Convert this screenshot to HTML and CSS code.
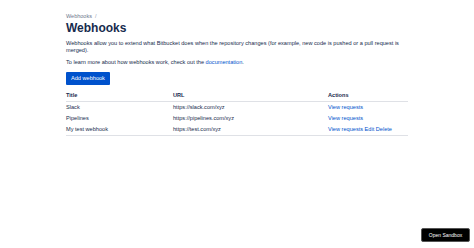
FILE: index.html
```html
<!DOCTYPE html>
<html>
<head>
<meta charset="utf-8">
<link rel="stylesheet" href="styles.css">
</head>
<body>
<main class="page">
  <nav class="crumbs"><a class="crumb" href="#">Webhooks</a><span class="sep">/</span></nav>
  <h1 class="title">Webhooks</h1>
  <p class="text">Webhooks allow you to extend what Bitbucket does when the repository changes (for example, new code is pushed or a pull request is merged).</p>
  <p class="text">To learn more about how webhooks work, check out the <a class="link" href="#">documentation</a>.</p>
  <button class="btn">Add webhook</button>
  <table class="hooks">
    <thead>
      <tr><th class="c-title">Title</th><th class="c-url">URL</th><th class="c-act">Actions</th></tr>
    </thead>
    <tbody>
      <tr><td>Slack</td><td>https://slack.com/xyz</td><td><a class="link" href="#">View requests</a></td></tr>
      <tr><td>Pipelines</td><td>https://pipelines.com/xyz</td><td><a class="link" href="#">View requests</a></td></tr>
      <tr><td>My test webhook</td><td>https://test.com/xyz</td><td><a class="link" href="#">View requests</a> <a class="link" href="#">Edit</a> <a class="link" href="#">Delete</a></td></tr>
    </tbody>
  </table>
</main>
<button class="sandbox">Open Sandbox</button>
</body>
</html>
```
FILE: styles.css
```css
html, body {
  margin: 0;
  padding: 0;
  background: #fff;
  font-family: "Liberation Sans", Arial, sans-serif;
  color: #172B4D;
}
.page {
  padding: 13px 0 0 66px;
  width: 342px;
}
.crumbs {
  font-size: 5.5px;
  line-height: 7px;
  color: #6B778C;
  display: flex;
  gap: 3px;
}
.crumb { color: #6B778C; text-decoration: none; }
.sep { color: #97A0AF; }
.title {
  margin: 1px 0 0;
  font-size: 12px;
  line-height: 14px;
  font-weight: 700;
  color: #172B4D;
}
.text {
  margin: 5px 0 0;
  font-size: 5.6px;
  line-height: 7px;
  color: #172B4D;
}
.text + .text { margin-top: 5px; }
.link { color: #0052CC; text-decoration: none; }
.btn {
  display: block;
  margin-top: 6px;
  height: 13px;
  padding: 0 5px;
  border: 0;
  border-radius: 1px;
  background: #0052CC;
  color: #fff;
  font-family: inherit;
  font-size: 5.6px;
  line-height: 13px;
}
.hooks {
  margin-top: 5px;
  width: 100%;
  border-collapse: collapse;
  font-size: 5.6px;
  line-height: 7px;
}
.hooks th {
  text-align: left;
  font-weight: 700;
  color: #172B4D;
  padding: 2px 0;
  border-bottom: 1px solid #DFE1E6;
}
.hooks td {
  padding: 2px 0;
}
.hooks tbody tr:last-child td { border-bottom: 1px solid #DFE1E6; }
.c-title { width: 107px; }
.c-url { width: 155px; }
.sandbox {
  position: fixed;
  right: 4px;
  bottom: 6px;
  height: 14px;
  width: 49px;
  padding: 0;
  border: 1px solid #555;
  border-radius: 2px;
  background: #000;
  color: #fff;
  font-family: inherit;
  font-size: 5px;
}
```
